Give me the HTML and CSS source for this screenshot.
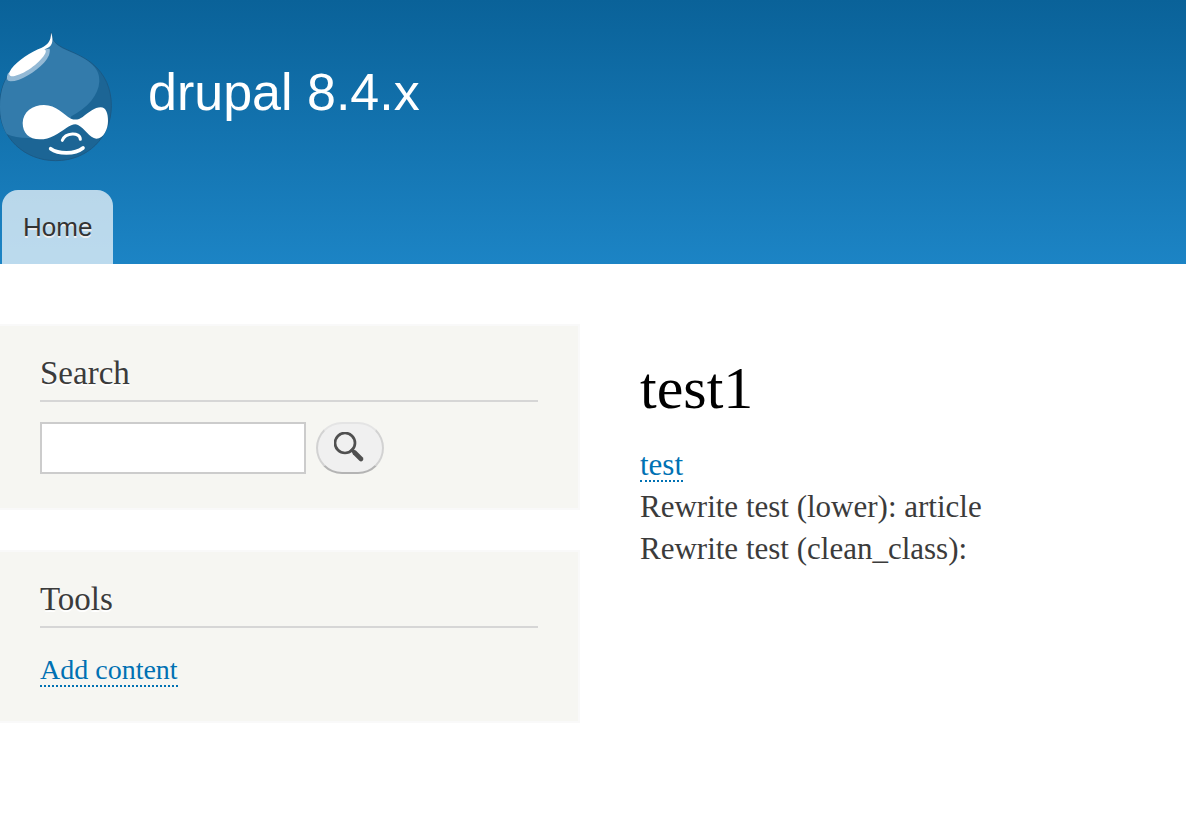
FILE: index.html
```html
<!DOCTYPE html>
<html lang="en">
  <head>
    <meta charset="utf-8">
    <meta name="viewport" content="width=device-width, initial-scale=1">
    <title>test1 | drupal 8.4.x</title>
    <link rel="stylesheet" href="styles.css">
  </head>
  <body>
    <header class="header">
      <div class="branding">
        <svg class="logo" viewBox="0 30 342 402" aria-hidden="true">
          <path fill="#1c6595" stroke="#1b5a86" stroke-width="3" d="M153 38C156 67 174 78 212 94C242 108 258 116 277 131C316 163 334 207 334 257C334 352 263 422 167 422C72 422 -1 352 -1 260C-1 212 14 171 43 144C62 124 86 111 112 95C140 81 154 67 153 38Z"/>
          <path fill="#337bab" d="M153 42C157 68 174 80 212 96C242 109 260 118 277 134C294 151 298 164 298 184C296 226 264 262 214 289L200 320L120 352C78 356 43 353 20 342C6 318 0 290 0 260C0 212 14 171 43 144C62 124 86 111 112 95C140 82 153 67 153 42Z"/>
          <path fill="#93b9d5" d="M24 160C18 174 20 184 32 184C62 184 108 154 132 128C146 112 151 99 149 86L136 88Z"/>
          <path fill="#fff" d="M153 38C154 64 142 77 114 88C78 105 40 132 29 155C25 165 30 171 44 168C80 160 124 124 136 100C139 93 137 89 133 88C147 84 155 78 157 64C158 53 156 45 153 38Z"/>
          <path fill="#fff" d="M132 255C169 255 190 284 213 296C225 301 237 299 248 291C268 276 284 262 302 262C318 262 324 280 324 303C324 327 311 356 289 356C269 355 253 324 234 315C224 310 214 315 200 323C174 340 152 358 119 358C87 358 68 339 68 309C69 275 98 255 132 255Z"/>
          <path fill="none" stroke="#fff" stroke-width="9" stroke-linecap="round" d="M187 361C196 337 240 335 241 358"/>
          <path fill="none" stroke="#fff" stroke-width="11" stroke-linecap="round" d="M152 386C174 402 224 404 249 384"/>
        </svg>
        <a class="site-name" href="#">drupal 8.4.x</a>
      </div>
      <nav class="menu" aria-label="Main navigation">
        <a class="tab" href="#">Home</a>
      </nav>
    </header>
    <div class="layout">
      <aside class="sidebar">
        <section class="block">
          <h2 class="block-title">Search</h2>
          <form class="search-form">
            <input class="search-input" type="search" aria-label="Search">
            <button class="search-button" type="button" aria-label="Search">
              <svg class="search-icon" viewBox="0 0 32 32" aria-hidden="true">
                <circle cx="11" cy="11" r="10" fill="none" stroke="#505050" stroke-width="2.700"/>
                <path d="M17 17L22 22" stroke="#505050" stroke-width="3"/>
                <path d="M20.500 20.500L27 27" stroke="#505050" stroke-width="4.600" stroke-linecap="round"/>
              </svg>
            </button>
          </form>
        </section>
        <section class="block">
          <h2 class="block-title">Tools</h2>
          <ul class="tools">
            <li><a class="link" href="#">Add content</a></li>
          </ul>
        </section>
      </aside>
      <main class="content">
        <h1 class="page-title">test1</h1>
        <div class="row"><a class="link" href="#">test</a></div>
        <div class="row">Rewrite test (lower): article</div>
        <div class="row">Rewrite test (clean_class):</div>
      </main>
    </div>
  </body>
</html>
```
FILE: styles.css
```css
* {
  box-sizing: border-box;
}
body {
  margin: 0;
  background: #fff;
  color: #3b3b3b;
  font-family: Georgia, "Liberation Serif", serif;
}
.header {
  padding-top: 30px;
  background: linear-gradient(#0a6299, #1c84c5);
  font-family: "Liberation Sans", Arial, sans-serif;
}
.branding {
  display: flex;
  align-items: center;
  gap: 34px;
}
.logo {
  width: 114px;
  height: 134px;
}
.site-name {
  padding-bottom: 10px;
  color: #fff;
  font-size: 52px;
  line-height: 60px;
  text-decoration: none;
}
.menu {
  display: flex;
  padding: 26px 2px 0;
}
.tab {
  padding: 0 21px;
  border-radius: 16px 16px 0 0;
  background: rgba(255, 255, 255, 0.7);
  color: #333;
  font-size: 26px;
  line-height: 74px;
  text-decoration: none;
  text-shadow: 0 2px #eee;
}
.layout {
  display: grid;
  grid-template-columns: 580fr 606fr;
  padding-top: 60px;
}
.sidebar {
  display: flex;
  flex-direction: column;
  gap: 40px;
}
.block {
  padding: 28px 40px 34px;
  border: solid #f9f9f9;
  border-width: 2px 2px 2px 0;
  background: #f6f6f2;
}
.block-title {
  margin: 0 0 20px;
  padding-bottom: 8px;
  border-bottom: 2px solid #d6d6d6;
  font-size: 33px;
  font-weight: normal;
  line-height: 38px;
  text-shadow: 0 2px #fff;
}
.search-form {
  display: flex;
  gap: 10px;
}
.search-input {
  width: 266px;
  height: 52px;
  border: 2px solid #ccc;
  border-radius: 0;
  background: #fff;
  font: inherit;
  font-size: 28px;
  appearance: none;
}
.search-button {
  display: flex;
  justify-content: center;
  width: 68px;
  height: 52px;
  padding: 8px 0 0;
  border: 2px solid;
  border-color: #e4e4e4 #d2d2d2 #b4b4b4;
  border-radius: 26px;
  background: #f0f0f0;
}
.search-icon {
  width: 32px;
  height: 32px;
}
.tools {
  margin: 0;
  padding: 6px 0 0;
  list-style: none;
  font-size: 28px;
  line-height: 32px;
}
.link {
  display: inline-block;
  border-bottom: 2px dotted #0071b3;
  color: #0071b3;
  line-height: 30px;
  text-decoration: none;
}
.content {
  padding: 30px 40px 0 60px;
}
.page-title {
  margin: 0 0 22px;
  color: #000;
  font-size: 60px;
  font-weight: normal;
  line-height: 68px;
}
.row {
  font-size: 31px;
  line-height: 42px;
}
```
